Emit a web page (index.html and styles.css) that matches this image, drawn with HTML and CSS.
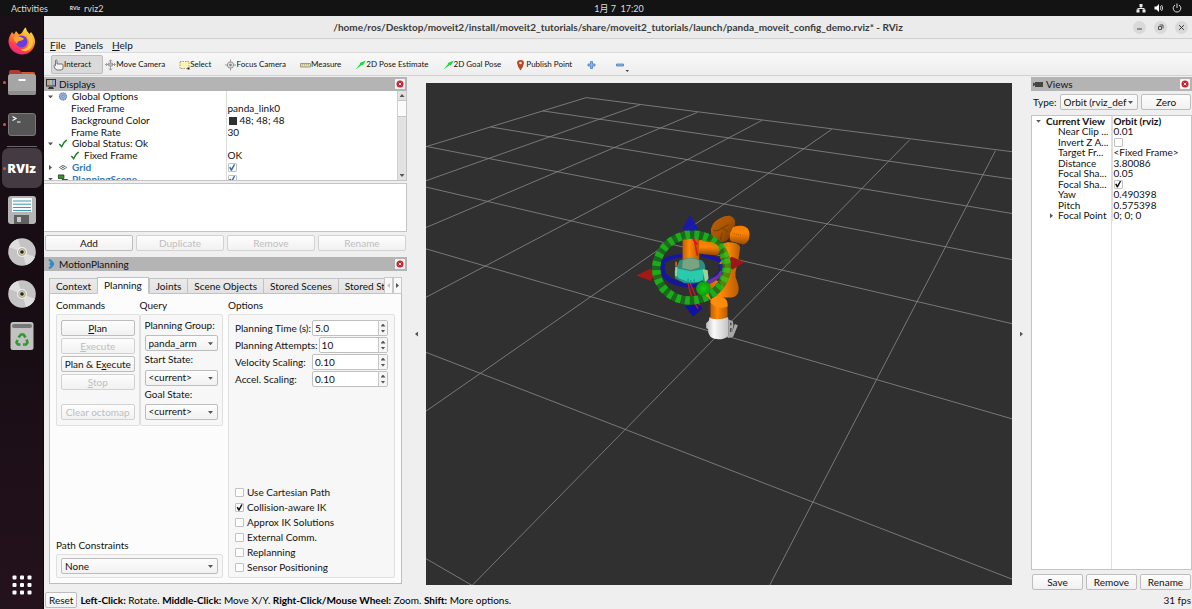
FILE: index.html
```html
<!DOCTYPE html>
<html lang="en">
<head>
    <meta charset="UTF-8">
    <meta name="viewport" content="width=device-width, initial-scale=1.0">
    <title>panda_moveit_config_demo.rviz* - RViz</title>
    <link rel="stylesheet" href="styles.css">
</head>
<body>

    <header class="topbar">
        <div class="topbar-left">
            <button type="button" class="topbar-item">Activities</button>
            <button type="button" class="topbar-item"><span class="mini-logo">RViz</span> rviz2</button>
        </div>
        <div class="clock">1月 7&nbsp; 17:20</div>
        <div class="tray">
            <svg width="10" height="10" viewBox="0 0 10 10" fill="#e8e8e8"><path d="M3.5 1h3v3h-1v1h3v1.500h1V9.500h-3v-3h1V6h-5v.5h1v3h-3v-3h1V5h3V4h-1z"/></svg>
            <svg width="10" height="10" viewBox="0 0 10 10"><path d="M.5 3.500h2L5 1v8L2.500 6.500h-2z" fill="#fff"/><path d="M6.300 3.200q1.300 1.800 0 3.600M7.600 2q2.200 3 0 6" fill="none" stroke="#ccc"/></svg>
            <svg width="10" height="10" viewBox="0 0 10 10" fill="none" stroke="#ddd"><path d="M3 2a3.800 3.800 0 1 0 4 0M5 .5v4.500"/></svg>
        </div>
    </header>

    <div class="desktop">
        <nav class="dock">
            <a href="#" class="dock-item" aria-label="Firefox">
                <svg width="28" height="28" viewBox="0 0 28 28">
                    <defs>
                        <linearGradient id="fox" x1="0.8" y1="0" x2="0.3" y2="1"><stop offset="0" stop-color="#fff04a"/><stop offset="0.4" stop-color="#ff9a2b"/><stop offset="0.75" stop-color="#ff3f4a"/><stop offset="1" stop-color="#e8208a"/></linearGradient>
                    </defs>
                    <path d="M2 8.500 4 5l2 2.500L8 4l3 3.500C13 7 14 6 15 4c.5-1.500 1.500-3 3-3.500 0 3 2 4.500 3.500 6.500L23 5c2.500 3 4.500 7 4 11-1 7-6.500 11.500-13 11.500S1.500 22.500.6 16C.3 13 1 10.500 2 8.500z" fill="url(#fox)"/>
                    <circle cx="13.500" cy="14.500" r="6" fill="#6a3ce0"/>
                    <path d="M5 10q4-1.500 8 0l3 1.500q-1 2-5 2.500-2 1-2 3Q6 14 5 10z" fill="#ffa62b"/>
                    <path d="M18 8q5 5 2 11-3 4-8 3 6 5 11-1 4-6 0-12z" fill="#ffc53a"/>
                </svg>
            </a>
            <a href="#" class="dock-item running" aria-label="Files">
                <svg width="28" height="28" viewBox="0 0 28 28">
                    <path d="M1 3q0-2 2-2h7q2 0 3 2h12q2 0 2 2v8H1z" fill="#b03a35"/>
                    <path d="M14 3h11q2 0 2 2v6H13z" fill="#dd552a"/>
                    <rect x="0" y="5" width="28" height="21" rx="2.500" fill="#a5a5a5"/>
                    <path d="M0 23q0 3 3 3h22q3 0 3-3v-1H0z" fill="#8e8e8e"/>
                    <path d="M10.500 11h7" stroke="#fff" stroke-width="2" fill="none"/>
                </svg>
            </a>
            <a href="#" class="dock-item running" aria-label="Terminal">
                <svg width="28" height="28" viewBox="0 0 28 28">
                    <rect x="0.500" y="2.500" width="27" height="22" rx="2.500" fill="#555" stroke="#777"/>
                    <path d="M4.500 5.500 8 7.500l-3.500 2M9 11h3.500" stroke="#fff" stroke-width="1.200" fill="none"/>
                </svg>
            </a>
            <hr class="dock-line">
            <a href="#" class="dock-item running active">RViz</a>
            <a href="#" class="dock-item" aria-label="Floppy">
                <svg width="28" height="28" viewBox="0 0 28 28">
                    <path d="M3 0h22q3 0 3 3v22q0 3-3 3H3q-3 0-3-3V3q0-3 3-3z" fill="#b5b5b5"/>
                    <path d="M4 2h20v14H4z" fill="#fafafa"/>
                    <path d="M5 5h18M5 8.200h18M5 11.500h18M5 14.500h18" stroke="#3f9cb0"/>
                    <path d="M6 19h15v9H6z" fill="#606060"/>
                    <path d="M9 21h4v5H9z" fill="#c8c8c8"/>
                </svg>
            </a>
            <a href="#" class="dock-item" aria-label="Disc 1">
                <svg width="28" height="28" viewBox="0 0 28 28">
                    <circle cx="14" cy="14" r="13.800" fill="#c4c4c4"/>
                    <path d="M14 14 1 9a14 14 0 0 1 9-8zM14 14l13 5a14 14 0 0 1-9 8z" fill="#dedede"/>
                    <circle cx="14" cy="14" r="5" fill="#f0f0f0"/>
                    <circle cx="14" cy="14" r="3.500" fill="#d5d0a8" stroke="#888" stroke-width="0.600"/>
                    <circle cx="14" cy="14" r="1.800" fill="#222"/>
                </svg>
            </a>
            <a href="#" class="dock-item" aria-label="Disc 2">
                <svg width="28" height="28" viewBox="0 0 28 28">
                    <circle cx="14" cy="14" r="13.800" fill="#c4c4c4"/>
                    <path d="M14 14 1 9a14 14 0 0 1 9-8zM14 14l13 5a14 14 0 0 1-9 8z" fill="#dedede"/>
                    <circle cx="14" cy="14" r="5" fill="#f0f0f0"/>
                    <circle cx="14" cy="14" r="3.500" fill="#d5d0a8" stroke="#888" stroke-width="0.600"/>
                    <circle cx="14" cy="14" r="1.800" fill="#222"/>
                </svg>
            </a>
            <a href="#" class="dock-item" aria-label="Trash">
                <svg width="28" height="28" viewBox="0 0 28 28">
                    <rect x="2.500" y="0" width="23" height="28" rx="2.500" fill="#c2c2c2"/>
                    <rect x="4" y="2" width="20" height="4" rx="2" fill="#777"/>
                    <g fill="none" stroke="#2f9a2f" stroke-width="2.600">
                        <path d="M10.500 15.500 13 12.500h2.500l2 3"/>
                        <path d="M18.500 17.500l1 3-1.500 2h-3"/>
                        <path d="M12.500 22.500H10l-1.500-2 1-2.500"/>
                    </g>
                </svg>
            </a>
            <a href="#" class="dock-item apps" aria-label="Show applications">
                <svg width="20" height="20" viewBox="0 0 20 20" fill="#fff">
                    <rect x="0.500" y="0.500" width="4" height="4" rx="1"/><rect x="8" y="0.500" width="4" height="4" rx="1"/><rect x="15.500" y="0.500" width="4" height="4" rx="1"/>
                    <rect x="0.500" y="8" width="4" height="4" rx="1"/><rect x="8" y="8" width="4" height="4" rx="1"/><rect x="15.500" y="8" width="4" height="4" rx="1"/>
                    <rect x="0.500" y="15.500" width="4" height="4" rx="1"/><rect x="8" y="15.500" width="4" height="4" rx="1"/><rect x="15.500" y="15.500" width="4" height="4" rx="1"/>
                </svg>
            </a>
        </nav>

        <div class="window">
            <div class="titlebar">
                <h1>/home/ros/Desktop/moveit2/install/moveit2_tutorials/share/moveit2_tutorials/launch/panda_moveit_config_demo.rviz* - RViz</h1>
                <div class="window-buttons">
                    <button type="button" aria-label="Minimize"><svg width="13" height="13" viewBox="0 0 13 13"><path d="M4 8h5" stroke="#444"/></svg></button>
                    <button type="button" aria-label="Restore"><svg width="13" height="13" viewBox="0 0 13 13" fill="none" stroke="#444"><path d="M4.500 5.500h3v3h-3zM5.500 4h3.500v3.500" stroke-width="0.900"/></svg></button>
                    <button type="button" aria-label="Close"><svg width="13" height="13" viewBox="0 0 13 13"><path d="M4.200 4.200l4.600 4.600M8.800 4.200 4.200 8.800" stroke="#333"/></svg></button>
                </div>
            </div>

            <div class="menubar">
                <button type="button"><u>F</u>ile</button>
                <button type="button"><u>P</u>anels</button>
                <button type="button"><u>H</u>elp</button>
            </div>

            <div class="toolbar">
                <button type="button" class="tool checked">
                    <svg width="11" height="12" viewBox="0 0 11 12"><path d="M2.500 6.500V1.500q.8-1 1.500 0V5h5q1 0 1 1v3q0 2-2 2H4.500Q2.500 11 1.800 9L.8 6.800q.4-1 1.700-.3z" fill="#f4f4f4" stroke="#555" stroke-width="0.800"/></svg>
                    Interact
                </button>
                <button type="button" class="tool">
                    <svg width="11" height="12" viewBox="0 0 11 12"><path d="M5.500 1v10M.5 5.500h10M4 2.500 5.500.8 7 2.500M4 9.500l1.500 1.700L7 9.500M2 4 .5 5.500 2 7M9 4l1.500 1.500L9 7" fill="none" stroke="#888" stroke-width="0.800"/><path d="M3.500 4h4v3h-4z" fill="#bbb" stroke="#888" stroke-width="0.600"/></svg>
                    Move Camera
                </button>
                <button type="button" class="tool">
                    <svg width="11" height="12" viewBox="0 0 11 12"><path d="M1 2.500h9v7H1z" fill="#fbf5b4" stroke="#888" stroke-width="0.800" stroke-dasharray="1.500 1"/><path d="M8.500 8.500h2v2h-2z" fill="#222"/></svg>
                    Select
                </button>
                <button type="button" class="tool">
                    <svg width="11" height="12" viewBox="0 0 11 12"><circle cx="5.500" cy="6" r="3.200" fill="#ddd" stroke="#999"/><circle cx="5.500" cy="6" r="1.300" fill="#888"/><path d="M5.500.5v3M5.500 8.500v3M0 6h3M8 6h3" stroke="#999"/></svg>
                    Focus Camera
                </button>
                <button type="button" class="tool">
                    <svg width="11" height="12" viewBox="0 0 11 12"><path d="M.5 4.500h10v3.500H.5z" fill="#e7e0ac" stroke="#8a8669" stroke-width="0.800"/><path d="M2.500 5v1.500M4.500 5v1.500M6.500 5v1.500M8.500 5v1.500" stroke="#8a8669" stroke-width="0.500"/></svg>
                    Measure
                </button>
                <button type="button" class="tool">
                    <svg width="11" height="12" viewBox="0 0 11 12"><path d="M.5 10.500 5 5l-.2-1 6-2.500-3 5-1-.5z" fill="#17dc3c"/></svg>
                    2D Pose Estimate
                </button>
                <button type="button" class="tool">
                    <svg width="11" height="12" viewBox="0 0 11 12"><path d="M.5 10.500 5 5l-.2-1 6-2.500-3 5-1-.5z" fill="#17dc3c"/></svg>
                    2D Goal Pose
                </button>
                <button type="button" class="tool">
                    <svg width="11" height="12" viewBox="0 0 11 12"><path d="M5.500 11.500Q2.500 7.500 2 4q0-3 3.500-3T9 4q-.5 3.500-3.500 7.500z" fill="#b8462a"/><circle cx="5.500" cy="4" r="1.300" fill="#f3d6cc"/></svg>
                    Publish Point
                </button>
                <button type="button" class="tool" aria-label="Add tool">
                    <svg width="11" height="12" viewBox="0 0 11 12"><path d="M4.500 2.500h2v2.500H9v2H6.500v2.500h-2V7H2V5h2.500z" fill="#8db5e8" stroke="#4b7fc0" stroke-width="0.800"/></svg>
                </button>
                <button type="button" class="tool" aria-label="Remove tool">
                    <svg width="20" height="12" viewBox="0 0 20 12"><path d="M5.500 5h7v2h-7z" fill="#8db5e8" stroke="#4b7fc0" stroke-width="0.800"/><path d="M14.500 11h3.500l-1.700 2z" fill="#444"/></svg>
                </button>
            </div>

            <main class="workspace">
                <aside class="left-side">
                    <div class="panel-head">
                        <svg width="12" height="12" viewBox="0 0 12 12"><rect x="1" y="1" width="10" height="7.500" fill="#333"/><path d="M2 2h3v5.500H2z" fill="#d59a9a"/><path d="M5 2h2.500v5.500H5z" fill="#95cf9a"/><path d="M7.500 2H10v5.500H7.500z" fill="#a5a0dc"/><path d="M4 9h4l1 2H3z" fill="#333"/></svg>
                        <h2>Displays</h2>
                        <button type="button" class="panel-close" aria-label="Close Displays"><svg width="10" height="10" viewBox="0 0 10 10"><circle cx="5" cy="5" r="3.500" fill="#c8202c"/><path d="M3.700 3.700l2.600 2.600M6.300 3.700 3.700 6.300" stroke="#fff" stroke-width="0.900"/></svg></button>
                    </div>
                    <div class="displays-view">
                        <div class="tree-clip">
                            <table class="tree displays-tree">
                                <colgroup><col class="name-col"><col></colgroup>
                                <tr><td><span class="node"><i class="arrow down"></i><svg width="12" height="11" viewBox="0 0 12 12"><circle cx="6" cy="6" r="3.800" fill="#9cbbe0" stroke="#5b83b8" stroke-width="1.500" stroke-dasharray="1.500 .6"/><circle cx="6" cy="6" r="1.500" fill="none" stroke="#5b83b8" stroke-width="0.700"/></svg>Global Options</span></td><td></td></tr>
                                <tr><td><span class="node leaf">Fixed Frame</span></td><td>panda_link0</td></tr>
                                <tr><td><span class="node leaf">Background Color</span></td><td><span class="swatch"></span>48; 48; 48</td></tr>
                                <tr><td><span class="node leaf">Frame Rate</span></td><td>30</td></tr>
                                <tr><td><span class="node"><i class="arrow down"></i><svg width="12" height="11" viewBox="0 0 12 12"><path d="M2 6.500 4.500 9.500Q6 5 10 2" fill="none" stroke="#1c7a1c" stroke-width="1.500"/></svg>Global Status: Ok</span></td><td></td></tr>
                                <tr><td><span class="node sub"><svg width="12" height="11" viewBox="0 0 12 12"><path d="M2 6.500 4.500 9.500Q6 5 10 2" fill="none" stroke="#1c7a1c" stroke-width="1.500"/></svg>Fixed Frame</span></td><td>OK</td></tr>
                                <tr><td><span class="node display"><i class="arrow right"></i><svg width="12" height="11" viewBox="0 0 12 12" fill="none" stroke="#555" stroke-width="0.800"><path d="M2 6l4-2.500L10 6 6 8.500zM4 4.700l4 2.500M8 4.700 4 7.200"/></svg>Grid</span></td><td><input type="checkbox" class="box blue" aria-label="Grid" checked></td></tr>
                                <tr><td><span class="node display"><i class="arrow down"></i><svg width="12" height="11" viewBox="0 0 12 12"><path d="M1 1h6v4H1zM5 6h6v4H5z" fill="#1da51d" stroke="#222" stroke-width="0.800"/></svg>PlanningScene</span></td><td><input type="checkbox" class="box blue" aria-label="PlanningScene" checked></td></tr>
                            </table>
                        </div>
                        <div class="scrollbar"><i class="arrow up"></i><span class="thumb"></span><i class="arrow down"></i></div>
                    </div>
                    <div class="description"></div>
                    <div class="button-row displays-buttons">
                        <button type="button" class="btn">Add</button>
                        <button type="button" class="btn" disabled>Duplicate</button>
                        <button type="button" class="btn" disabled>Remove</button>
                        <button type="button" class="btn" disabled>Rename</button>
                    </div>

                    <div class="panel-head">
                        <svg width="12" height="12" viewBox="0 0 12 12" fill="none" stroke="#2b8bc8" stroke-width="2"><path d="M4 1.500l3 2.500-1.500 2L7 8l-3 2.500M8 4.500v3"/></svg>
                        <h2>MotionPlanning</h2>
                        <button type="button" class="panel-close" aria-label="Close MotionPlanning"><svg width="10" height="10" viewBox="0 0 10 10"><circle cx="5" cy="5" r="3.500" fill="#c8202c"/><path d="M3.700 3.700l2.600 2.600M6.300 3.700 3.700 6.300" stroke="#fff" stroke-width="0.900"/></svg></button>
                    </div>
                    <div class="tabs">
                        <div class="tab-list" role="tablist">
                            <button type="button" role="tab">Context</button>
                            <button type="button" role="tab" aria-selected="true">Planning</button>
                            <button type="button" role="tab">Joints</button>
                            <button type="button" role="tab">Scene Objects</button>
                            <button type="button" role="tab">Stored Scenes</button>
                            <button type="button" role="tab">Stored States</button>
                        </div>
                        <button type="button" class="tab-scroll" aria-label="Scroll left" disabled><i class="arrow left"></i></button>
                        <button type="button" class="tab-scroll" aria-label="Scroll right"><i class="arrow right"></i></button>
                    </div>
                    <div class="tab-page">
                        <div class="page-left">
                            <div class="group-pair">
                                <section>
                                    <h3>Commands</h3>
                                    <div class="group commands">
                                        <button type="button" class="btn"><u>P</u>lan</button>
                                        <button type="button" class="btn" disabled><u>E</u>xecute</button>
                                        <button type="button" class="btn">Plan &amp; E<u>x</u>ecute</button>
                                        <button type="button" class="btn" disabled><u>S</u>top</button>
                                        <button type="button" class="btn clear" disabled>Clear octomap</button>
                                    </div>
                                </section>
                                <section>
                                    <h3>Query</h3>
                                    <div class="group query">
                                        <label for="planning-group">Planning Group:</label>
                                        <div class="combo"><select id="planning-group"><option>panda_arm</option></select></div>
                                        <label for="start-state">Start State:</label>
                                        <div class="combo"><select id="start-state"><option>&lt;current&gt;</option></select></div>
                                        <label for="goal-state">Goal State:</label>
                                        <div class="combo"><select id="goal-state"><option>&lt;current&gt;</option></select></div>
                                    </div>
                                </section>
                            </div>
                            <section>
                                <h3><label for="constraints">Path Constraints</label></h3>
                                <div class="group constraints">
                                    <div class="combo"><select id="constraints"><option>None</option></select></div>
                                </div>
                            </section>
                        </div>
                        <section class="page-right">
                            <h3>Options</h3>
                            <div class="group options">
                                <div class="fields">
                                    <div class="field"><label for="time">Planning Time (s):</label><div class="spin"><input id="time" type="text" value="5.0"><span class="steps"><i class="arrow up"></i><i class="arrow down"></i></span></div></div>
                                    <div class="field"><label for="attempts">Planning Attempts:</label><div class="spin"><input id="attempts" type="text" value="10"><span class="steps"><i class="arrow up"></i><i class="arrow down"></i></span></div></div>
                                    <div class="field"><label for="velocity">Velocity Scaling:</label><div class="spin"><input id="velocity" type="text" value="0.10"><span class="steps"><i class="arrow up"></i><i class="arrow down"></i></span></div></div>
                                    <div class="field"><label for="accel">Accel. Scaling:</label><div class="spin"><input id="accel" type="text" value="0.10"><span class="steps"><i class="arrow up"></i><i class="arrow down"></i></span></div></div>
                                </div>
                                <div class="checks">
                                    <label><input type="checkbox" class="box">Use Cartesian Path</label>
                                    <label><input type="checkbox" class="box" checked>Collision-aware IK</label>
                                    <label><input type="checkbox" class="box">Approx IK Solutions</label>
                                    <label><input type="checkbox" class="box">External Comm.</label>
                                    <label><input type="checkbox" class="box">Replanning</label>
                                    <label><input type="checkbox" class="box">Sensor Positioning</label>
                                </div>
                            </div>
                        </section>
                    </div>
                </aside>

                <button type="button" class="side-toggle" aria-label="Hide left panels"><i class="arrow left"></i></button>

                <div class="render-view">
                    <svg class="scene" viewBox="427 83 585 502" preserveAspectRatio="xMidYMid slice">
                        <defs>
                            <linearGradient id="orange" x1="0" x2="1" y1="0" y2="0"><stop offset="0" stop-color="#c45f00"/><stop offset="0.400" stop-color="#ff8808"/><stop offset="1" stop-color="#b85a00"/></linearGradient>
                            <linearGradient id="orangeDown" x1="0" x2="0" y1="0" y2="1"><stop offset="0" stop-color="#f07c00"/><stop offset="0.400" stop-color="#ff8400"/><stop offset="1" stop-color="#9a4b00"/></linearGradient>
                            <linearGradient id="brown" x1="0" x2="1" y1="0" y2="1"><stop offset="0" stop-color="#bd6205"/><stop offset="0.500" stop-color="#a95400"/><stop offset="1" stop-color="#6b3600"/></linearGradient>
                            <linearGradient id="white" x1="0" x2="1" y1="0" y2="0"><stop offset="0" stop-color="#b9b9b9"/><stop offset="0.350" stop-color="#fafafa"/><stop offset="1" stop-color="#c4c4c4"/></linearGradient>
                            <radialGradient id="ball"><stop offset="0" stop-color="#18c818"/><stop offset="1" stop-color="#0c9c0c"/></radialGradient>
                        </defs>
                        <!-- ground grid -->
                        <g class="grid-lines">
                            <path d="M587 98 1012 152M543.500 111.300 1012 179.300M491.500 127.300 1012 213.700M427 146.700 1012 259.700M427 187.300 1012 323.700M427 249 1012 418.700M427 352.300 1012 578.700M427 558.300 473 585"/>
                            <path d="M587 98 427 147M641 105 427 181M698 112.700 427 227.700M762.500 120.700 427 297.300M832 129.700 427 411M910 140 473 585M995.500 151 770 585"/>
                        </g>
                        <!-- panda arm with the interactive marker -->
                        <g transform="translate(620 200) scale(0.3333)">
                            <path d="M270 352h56v56q-10 10-30 10-22-2-26-12l-4-10v-8l-6-4v-14l8-8z" fill="url(#white)"/>
                            <path d="M326 358l14 6 2 12-6 28-10 6zM346 372l9 4-14 34-16 4-2-6 12-4z" fill="#a8a8a8"/>
                            <path d="M334 368v8M334 384v12" stroke="#222" stroke-width="3"/>
                            <path d="M273 306q0-16 20-18 30-2 31 24v40q-24 10-51 3z" fill="url(#orange)"/>
                            <path d="M273 308q20 24 51 12v-8q-4-24-36-24-14 4-15 20z" fill="#ff8b0c"/>
                            <path d="M300 190q0-10 10-12h48l-8 30q-4 12-2 24 12 26 9 42-4 18-22 19-34 0-52-8-22-6-16-40 2-14 16-12l10 10 16-2q-10-28-9-51z" fill="url(#orange)"/>
                            <path d="M302 152q0-24 22-25 36 0 38 16l-6 42q-24 12-54 2z" fill="url(#orange)"/>
                            <path d="M276 108q-6-24 8-40 24-22 46-20 20 6 17 26l-11 20-10 24q-14 14-28 6-18-6-22-16z" fill="url(#brown)"/>
                            <path d="M282 92q12 4 24-6l22-12M308 98l-6 24M306 84l20 12" stroke="#7a3f00" stroke-width="3" fill="none"/>
                            <path d="M340 82q8-6 28-4 22 4 22 26 0 24-18 30l-38-10q-6-10-2-24z" fill="url(#orangeDown)"/>
                            <path d="M338 100l26 6" stroke="#8b4500" stroke-width="2" stroke-dasharray="3 3" fill="none"/>
                            <path d="M236 128q0-8 10-8l42 2q18 4 18 22-2 22-20 22l-50-6z" fill="url(#orangeDown)"/>

                            <path d="M133 190q-8 12 0 34 26 32 82 32 60-2 90-38 2-14-2-26" fill="none" stroke="#1414a8" stroke-opacity="0.900" stroke-width="14"/>
                            <path d="M128 188q20-18 62-20M246 166q34 4 58 18" fill="none" stroke="#1414b4" stroke-opacity="0.900" stroke-width="12"/>
                            <path d="M308 214q-10 22-46 34" fill="none" stroke="#8a3ba0" stroke-width="12" stroke-opacity="0.750"/>
                            <path d="M51 227l45-22v8l30-2v26l-30-2v8z" fill="#a51818"/>
                            <path d="M375 187l-38-16-12 8v22l14 8z" fill="#a01515"/>
                            <path d="M197 318l24 32 28-24-10-14z" fill="#1212a0"/>
                            <path d="M190 120q0-10 24-10t25 10v58q-24 10-49 2z" fill="url(#orange)"/>
                            <path d="M206 250q8 46 30 76M212 250l28 66" fill="none" stroke="#d8161c" stroke-width="4"/>
                            <path d="M212 46l-23 40q6 6 12 6v24h24V92l11-6z" fill="#1717b8" fill-opacity="0.900"/>
                            <g fill="none" transform="rotate(-14 216 203)">
                                <ellipse cx="216" cy="203" rx="106" ry="98" stroke="#1a6e1a" stroke-opacity="0.900" stroke-width="25"/>
                                <ellipse cx="216" cy="203" rx="106" ry="98" stroke="#1cb41c" stroke-opacity="0.900" stroke-width="25" stroke-dasharray="14 13"/>
                            </g>
                            <path d="M240 128q30-8 52 6 12 12 6 26-24 10-58 0z" fill="url(#orangeDown)" fill-opacity="0.900"/>
                            <path d="M308 126l20 18 6 52-6 44-20 26-6-18 14-42-2-50z" fill="#a8c400" fill-opacity="0.300"/>
                            <path d="M190 120h48v58q-24 8-48 2z" fill="url(#orange)" fill-opacity="0.900"/>
                            <path d="M224 116l10 52M220 118l14 16" stroke="#e0141a" stroke-width="5"/>

                            <path d="M180 182q34-16 68 0 12 12 9 28l8 2 2 26-10 10-14-10-18 12h-30l-28-14-2-22 8-8q0-12 7-24z" fill="#2f9c8c" fill-opacity="0.850"/>
                            <path d="M190 182q22-12 48 0l2 20-26 8-26-6z" fill="#7aa382"/>
                            <path d="M174 206l40 8 40-6-4 32-14 8-30-2-30-12z" fill="#2ad0b2" fill-opacity="0.900"/>
                            <path d="M250 208l14 2 3 26-10 12zM167 202l7-2v30l-7-2z" fill="#a2dd9a" fill-opacity="0.900"/>
                            <path d="M206 236v14M214 240v14M224 238v12" stroke="#118f8d" stroke-width="3"/>
                            <path d="M170 186v14" stroke="#d96a10" stroke-width="5"/>
                            <circle cx="252" cy="266" r="22" fill="url(#ball)"/>
                            <path d="M266 280l12 26-20-20z" fill="#e08a00"/>
                        </g>
                    </svg>
                </div>

                <button type="button" class="side-toggle" aria-label="Hide right panels"><i class="arrow right"></i></button>

                <aside class="right-side">
                    <div class="panel-head">
                        <svg width="12" height="12" viewBox="0 0 12 12" fill="#444"><path d="M1 4.500l2 1V4h8v5H3V7L1 8.500z"/></svg>
                        <h2>Views</h2>
                        <button type="button" class="panel-close" aria-label="Close Views"><svg width="10" height="10" viewBox="0 0 10 10"><circle cx="5" cy="5" r="3.500" fill="#c8202c"/><path d="M3.700 3.700l2.600 2.600M6.300 3.700 3.700 6.300" stroke="#fff" stroke-width="0.900"/></svg></button>
                    </div>
                    <div class="view-type">
                        <label for="view-type">Type:</label>
                        <div class="combo"><select id="view-type"><option>Orbit (rviz_def</option></select></div>
                        <button type="button" class="btn">Zero</button>
                    </div>
                    <div class="views-view">
                        <table class="tree views-tree">
                            <colgroup><col class="name-col"><col></colgroup>
                            <tr class="current"><td><span class="node"><i class="arrow down"></i>Current View</span></td><td>Orbit (rviz)</td></tr>
                            <tr><td><span class="node leaf">Near Clip ...</span></td><td>0.01</td></tr>
                            <tr><td><span class="node leaf">Invert Z A...</span></td><td><input type="checkbox" class="box" aria-label="Invert Z Axis"></td></tr>
                            <tr><td><span class="node leaf">Target Fr...</span></td><td>&lt;Fixed Frame&gt;</td></tr>
                            <tr><td><span class="node leaf">Distance</span></td><td>3.80086</td></tr>
                            <tr><td><span class="node leaf">Focal Sha...</span></td><td>0.05</td></tr>
                            <tr><td><span class="node leaf">Focal Sha...</span></td><td><input type="checkbox" class="box" aria-label="Focal Shape Fixed Size" checked></td></tr>
                            <tr><td><span class="node leaf">Yaw</span></td><td>0.490398</td></tr>
                            <tr><td><span class="node leaf">Pitch</span></td><td>0.575398</td></tr>
                            <tr><td><span class="node branch"><i class="arrow right"></i>Focal Point</span></td><td>0; 0; 0</td></tr>
                        </table>
                    </div>
                    <div class="button-row">
                        <button type="button" class="btn">Save</button>
                        <button type="button" class="btn">Remove</button>
                        <button type="button" class="btn">Rename</button>
                    </div>
                </aside>
            </main>

            <footer class="statusbar">
                <button type="button" class="btn">Reset</button>
                <p><b>Left-Click:</b> Rotate. <b>Middle-Click:</b> Move X/Y. <b>Right-Click/Mouse Wheel:</b> Zoom. <b>Shift:</b> More options.</p>
                <span class="fps">31 fps</span>
            </footer>
        </div>
    </div>

</body>
</html>
```
FILE: styles.css
```css
* {
    margin: 0;
    padding: 0;
    box-sizing: border-box;
}

body {
    min-height: 100vh;
    display: flex;
    flex-direction: column;
    background: #efefef;
    color: #111;
    font-family: "Lato", "Noto Sans CJK JP", sans-serif;
    font-size: 10px;
    line-height: 11px;
}

button,
input,
select {
    font: inherit;
    color: inherit;
    background: none;
    border: none;
}

button {
    white-space: nowrap;
}

h1,
h2,
h3 {
    font-size: 10px;
    font-weight: normal;
}

svg {
    display: block;
    flex: none;
}

/* top bar */

.topbar {
    display: grid;
    grid-template-columns: 1fr auto 1fr;
    align-items: center;
    height: 16px;
    padding: 0 10px 0 11px;
    background: #131313;
    color: #dcdcdc;
    font-size: 9px;
}

.topbar-left {
    display: flex;
    gap: 22px;
}

.topbar-item {
    display: flex;
    align-items: center;
    gap: 4px;
}

.mini-logo {
    font-size: 5px;
    font-weight: 900;
    line-height: 8px;
}

.clock {
    padding-left: 45px;
}

.tray {
    display: flex;
    justify-content: flex-end;
    gap: 8px;
}

.desktop {
    flex: 1;
    display: flex;
}

/* dock */

.dock {
    flex: none;
    width: 44px;
    display: flex;
    flex-direction: column;
    align-items: center;
    padding: 4px 0 3px;
    background: linear-gradient(#1b0f18, #160c12 45%, #24121c);
    border-right: 1px solid #0c070a;
}

.dock-item {
    position: relative;
    width: 42px;
    height: 42px;
    display: flex;
    align-items: center;
    justify-content: center;
    color: #fff;
    text-decoration: none;
}

.dock-item.running::before {
    content: "";
    position: absolute;
    left: 2px;
    top: 19px;
    width: 3px;
    height: 3px;
    border-radius: 50%;
    background: #e2552b;
}

.dock-item.active {
    width: 40px;
    height: 40px;
    margin: 1px 0;
    border-radius: 7px;
    background: #433b41;
    font-family: "Open Sans", sans-serif;
    font-size: 13px;
    font-weight: 800;
}

.dock-item.active::before {
    left: 1px;
}

.dock-line {
    width: 30px;
    border: none;
    border-top: 1px solid #6b6469;
}

.dock-item.apps {
    margin-top: auto;
}

/* window frame */

.window {
    flex: 1;
    min-width: 0;
    display: flex;
    flex-direction: column;
    background: #efefef;
}

.titlebar {
    position: relative;
    display: flex;
    align-items: center;
    justify-content: center;
    height: 23px;
    background: #ebebeb;
    border-bottom: 1px solid #cfcfcf;
}

.titlebar h1 {
    font-weight: bold;
    color: #3a3a3a;
}

.window-buttons {
    position: absolute;
    right: 4px;
    top: 5px;
    display: flex;
    gap: 8px;
}

.window-buttons button {
    width: 13px;
    height: 13px;
    border-radius: 50%;
    background: #d9d9d9;
}

.menubar {
    display: flex;
    gap: 9px;
    height: 14px;
    padding-left: 6px;
    border-bottom: 1px solid #dadada;
}

.toolbar {
    display: flex;
    align-items: center;
    height: 23px;
    padding: 1px 0 0 7px;
    background: linear-gradient(#f8f8f8, #ededed);
    border-bottom: 1px solid #d2d2d2;
    font-size: 8px;
}

.tool {
    display: flex;
    align-items: center;
    height: 19px;
    padding: 0 11px 0 1px;
    border: 1px solid transparent;
    border-radius: 2px;
}

.tool svg {
    overflow: visible;
}

.tool.checked {
    background: #dadada;
    border-color: #bcbcbc;
}

.workspace {
    flex: 1;
    display: flex;
    padding-top: 1px;
}

/* shared widgets */

.arrow {
    display: block;
    flex: none;
    width: 5px;
    height: 3px;
    background: #555;
    clip-path: polygon(0 0, 100% 0, 50% 100%);
}

.arrow.up {
    clip-path: polygon(50% 0, 100% 100%, 0 100%);
}

.arrow.right {
    width: 3px;
    height: 5px;
    clip-path: polygon(0 0, 100% 50%, 0 100%);
}

.arrow.left {
    width: 3px;
    height: 5px;
    clip-path: polygon(100% 0, 100% 100%, 0 50%);
}

.btn {
    height: 16px;
    line-height: 13px;
    padding: 0 4px;
    text-align: center;
    background: linear-gradient(#fdfdfd, #f1f1f1);
    border: 1px solid #bdbdbd;
    border-radius: 2px;
}

.btn:disabled {
    color: #bebebe;
    border-color: #d2d2d2;
}

.combo {
    position: relative;
}

.combo::after {
    content: "";
    position: absolute;
    right: 5px;
    top: 7px;
    width: 5px;
    height: 3px;
    background: #555;
    clip-path: polygon(0 0, 100% 0, 50% 100%);
    pointer-events: none;
}

.combo select {
    appearance: none;
    display: block;
    width: 100%;
    height: 16px;
    padding: 0 9px 0 3px;
    background: linear-gradient(#fdfdfd, #f1f1f1);
    border: 1px solid #bdbdbd;
    border-radius: 2px;
    overflow: hidden;
}

.box {
    appearance: none;
    flex: none;
    display: block;
    width: 9px;
    height: 9px;
    background: #fff;
    border: 1px solid #c2c2c2;
    border-radius: 1px;
}

.box:checked::before {
    content: "";
    display: block;
    width: 7px;
    height: 7px;
    background: #111;
    clip-path: polygon(8% 50%, 28% 40%, 42% 65%, 76% 4%, 96% 8%, 48% 98%, 34% 98%);
}

.box.blue:checked::before {
    background: #2a6db5;
}

.panel-head {
    display: flex;
    align-items: center;
    gap: 2px;
    height: 14px;
    padding: 0 2px 0 1px;
    background: #b4b4b4;
}

.panel-close {
    width: 10px;
    height: 10px;
    margin-left: auto;
    background: #f4f4f4;
    border-radius: 1px;
}

.button-row {
    display: grid;
    grid-auto-flow: column;
    grid-auto-columns: 1fr;
    gap: 3px;
    padding: 0 1px;
}

.tree {
    width: 100%;
    table-layout: fixed;
    border-collapse: collapse;
}

.tree td {
    white-space: nowrap;
    overflow: hidden;
    vertical-align: middle;
}

.tree td:first-child {
    border-right: 1px solid #dedede;
}

.tree td:last-child {
    padding-left: 1px;
}

.node {
    display: flex;
    align-items: center;
}

/* left panels */

.left-side {
    flex: none;
    width: 363px;
    display: flex;
    flex-direction: column;
    padding-bottom: 7px;
}

.displays-view {
    display: flex;
    height: 90px;
    background: #fff;
    border: 1px solid #c4c4c4;
    border-width: 0 1px 1px 0;
}

.tree-clip {
    flex: 1;
    overflow: hidden;
}

.displays-tree {
    height: 94px;
}

.displays-tree .name-col {
    width: 182px;
}

.displays-tree .node {
    padding-left: 4px;
    gap: 3px;
}

.displays-tree .arrow {
    margin-right: 1px;
}

.displays-tree .arrow.right {
    margin: 0 2px 0 1px;
}

.displays-tree .leaf {
    padding-left: 27px;
}

.displays-tree .sub {
    padding-left: 25px;
}

.displays-tree .display {
    color: #3379bd;
    font-weight: bold;
}

.swatch {
    display: inline-block;
    width: 8px;
    height: 8px;
    margin: 0 3px 0 1px;
    vertical-align: -1px;
    background: #303030;
}

.scrollbar {
    display: flex;
    flex-direction: column;
    align-items: center;
    width: 9px;
    padding: 3px 0;
    background: #e2e2e2;
    border-left: 1px solid #cfcfcf;
}

.scrollbar .thumb {
    width: 8px;
    height: 17px;
    margin: 3px 0 auto;
    background: #fbfbfb;
    border: 1px solid #c6c6c6;
    border-width: 1px 0;
}

.description {
    height: 49px;
    margin-top: 2px;
    background: #fff;
    border: 1px solid #c4c4c4;
    border-left: none;
}

.displays-buttons {
    margin: 3px 0 6px;
}

.tabs {
    display: flex;
    align-items: flex-end;
    margin: 6px 5px 0;
    height: 17px;
}

.tab-list {
    flex: 1;
    min-width: 0;
    height: 17px;
    display: flex;
    align-items: flex-end;
    overflow: hidden;
}

.tab-list button {
    flex: none;
    height: 16px;
    padding: 0 6px;
    background: linear-gradient(#ebebeb, #e2e2e2);
    border: 1px solid #c2c2c2;
    border-width: 1px 0 1px 1px;
}

.tab-list button[aria-selected="true"] {
    height: 17px;
    background: #fcfcfc;
    border-right-width: 1px;
    border-bottom-color: #fcfcfc;
}

.tab-scroll {
    width: 9px;
    height: 17px;
    display: flex;
    align-items: center;
    justify-content: center;
    background: #f8f8f8;
    border: 1px solid #c9c9c9;
}

.tab-scroll:disabled .arrow {
    background: #c4c4c4;
}

.tab-page {
    flex: 1;
    display: flex;
    gap: 5px;
    margin: 0 5px;
    padding: 6px 6px 5px;
    background: #fcfcfc;
    border: 1px solid #bdbdbd;
    border-top: none;
}

.tab-page h3 {
    height: 14px;
}

.page-left {
    width: 167px;
    display: flex;
    flex-direction: column;
    justify-content: space-between;
}

.page-right {
    flex: 1;
    display: flex;
    flex-direction: column;
}

.group {
    background: #f7f7f7;
    border: 1px solid #e0e0e0;
    border-radius: 2px;
}

.group-pair {
    display: grid;
    grid-template-columns: 1fr 1fr;
}

.commands,
.query {
    height: 112px;
    display: flex;
    flex-direction: column;
    padding: 5px 4px;
}

.commands {
    gap: 2px;
}

.commands .btn {
    padding: 0;
}

.commands .clear {
    margin-top: auto;
}

.query label {
    height: 19px;
    padding-top: 2px;
    line-height: 13px;
}

.query {
    padding-top: 2px;
}

.constraints {
    padding: 3px 4px;
}

.options {
    flex: 1;
    display: flex;
    flex-direction: column;
    justify-content: space-between;
    padding: 5px 6px 2px;
}

.fields {
    display: grid;
    gap: 1px;
}

.field {
    display: flex;
    align-items: center;
    gap: 1px;
}

.field label {
    min-width: 76px;
}

.spin {
    flex: 1;
    min-width: 0;
    display: flex;
    height: 16px;
    background: #fff;
    border: 1px solid #c0c0c0;
    border-radius: 2px;
}

.spin input {
    flex: 1;
    width: 0;
    padding: 0 2px;
}

.steps {
    width: 9px;
    display: flex;
    flex-direction: column;
    align-items: center;
    justify-content: center;
    gap: 3px;
    background: #f5f5f5;
    border-left: 1px solid #c8c8c8;
}

.checks label {
    display: flex;
    align-items: center;
    gap: 3px;
    height: 15px;
}

/* 3D view */

.side-toggle {
    flex: none;
    width: 19px;
    display: flex;
    align-items: center;
    justify-content: center;
}

.render-view {
    flex: 1;
    min-width: 0;
    position: relative;
    margin: 6px 0;
    background: #303030;
    overflow: hidden;
}

.scene {
    position: absolute;
    width: 100%;
    height: 100%;
}

.grid-lines {
    fill: none;
    stroke: #8a8a8a;
    stroke-width: 0.8px;
}

/* right panel */

.right-side {
    flex: none;
    width: 161px;
    display: flex;
    flex-direction: column;
    padding-bottom: 1px;
}

.view-type {
    display: flex;
    align-items: center;
    gap: 3px;
    padding: 3px 1px 5px 2px;
}

.view-type .combo {
    flex: 1;
    min-width: 0;
}

.view-type .btn {
    width: 50px;
}

.views-view {
    flex: 1;
    margin-bottom: 4px;
    background: linear-gradient(to right, #fff 79px, #dedede 79px, #dedede 80px, #fff 80px);
    border: 1px solid #c4c4c4;
}

.views-tree {
    height: 105px;
    line-height: 9px;
}

.views-tree .name-col {
    width: 80px;
}

.views-tree .node {
    padding-left: 4px;
    gap: 5px;
}

.views-tree .leaf {
    padding-left: 26px;
}

.views-tree .branch {
    padding-left: 18px;
}

.views-tree .current {
    font-weight: bold;
}

/* status bar */

.statusbar {
    display: flex;
    align-items: center;
    gap: 3px;
    height: 18px;
    padding: 0 1px;
}

.statusbar .btn {
    padding: 0 3px;
}

.statusbar p {
    color: #000;
}

.fps {
    margin-left: auto;
}
```
